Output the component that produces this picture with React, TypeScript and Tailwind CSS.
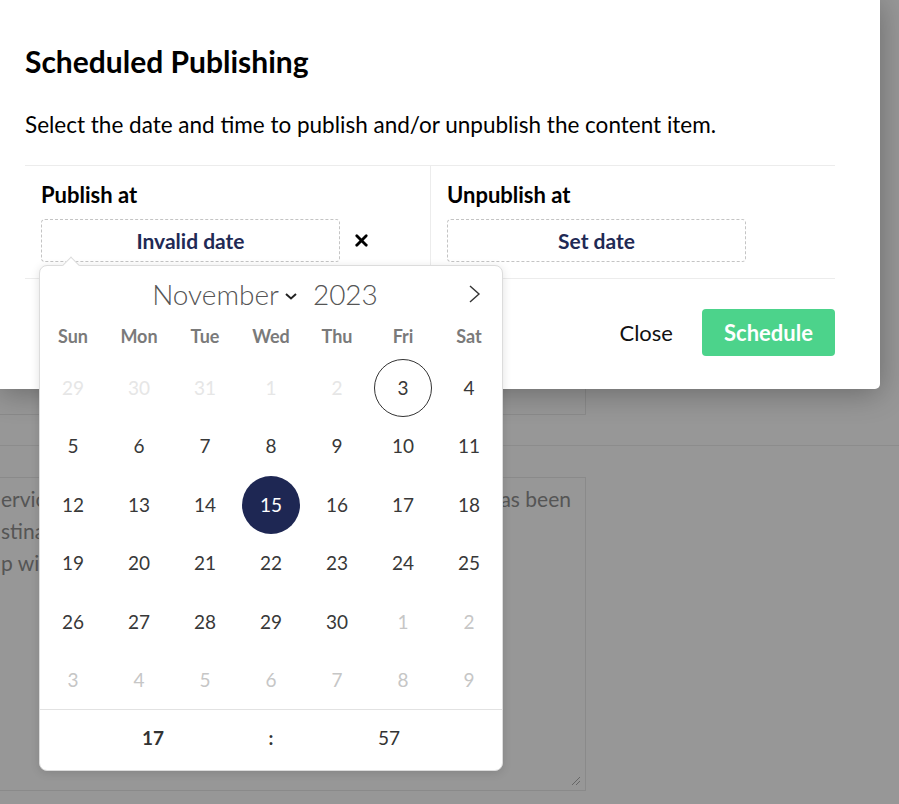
import { X } from 'lucide-react'

type Day = { n: number; kind: 'off' | 'cur' | 'next' | 'today' | 'sel' }

const weeks: Day[][] = [
  [
    { n: 29, kind: 'off' },
    { n: 30, kind: 'off' },
    { n: 31, kind: 'off' },
    { n: 1, kind: 'off' },
    { n: 2, kind: 'off' },
    { n: 3, kind: 'today' },
    { n: 4, kind: 'cur' },
  ],
  [5, 6, 7, 8, 9, 10, 11].map((n) => ({ n, kind: 'cur' as const })),
  [12, 13, 14, 15, 16, 17, 18].map((n) => ({ n, kind: n === 15 ? ('sel' as const) : ('cur' as const) })),
  [19, 20, 21, 22, 23, 24, 25].map((n) => ({ n, kind: 'cur' as const })),
  [
    ...[26, 27, 28, 29, 30].map((n) => ({ n, kind: 'cur' as const })),
    { n: 1, kind: 'next' },
    { n: 2, kind: 'next' },
  ],
  [3, 4, 5, 6, 7, 8, 9].map((n) => ({ n, kind: 'next' as const })),
]

const weekdays = ['Sun', 'Mon', 'Tue', 'Wed', 'Thu', 'Fri', 'Sat']

function DayCell({ day }: { day: Day }) {
  const tone = {
    off: 'text-[#e6e6e6]',
    cur: 'text-[#383838]',
    next: 'text-[#c6c6c6]',
    today: 'text-[#383838] border border-[#333]',
    sel: 'bg-[#1e2753] text-white',
  }[day.kind]
  return (
    <div className="flex h-[58.4px] items-center justify-center">
      <span className={`flex h-[58px] w-[58px] items-center justify-center rounded-full text-[19px] ${tone}`}>
        {day.n}
      </span>
    </div>
  )
}

function DatePicker() {
  return (
    <div className="absolute left-[39px] top-[265px] h-[506px] w-[464px] rounded-[8px] border border-[#dcdcdc] bg-white shadow-[0_2px_10px_rgba(0,0,0,0.12)]">
      {/* arrow */}
      <div className="absolute -top-[7px] left-[25px] h-[12px] w-[12px] rotate-45 border-l border-t border-[#dcdcdc] bg-white" />
      <div className="relative flex h-[56px] items-center justify-center">
        <div className="flex items-center pr-[12px] text-[28px] font-light text-[#555]">
          <span>November</span>
          <svg width="14" height="10" viewBox="0 0 14 10" className="ml-[5px] mt-[4px]">
            <path d="M2 3l5 4.5L12 3" fill="none" stroke="#222" strokeWidth="2" />
          </svg>
          <span className="ml-[15px]">2023</span>
        </div>
        <svg width="14" height="20" viewBox="0 0 14 20" className="absolute right-[20px] top-[18px]">
          <path d="M2 2l9 8-9 8" fill="none" stroke="#333" strokeWidth="1.4" />
        </svg>
      </div>
      <div className="grid h-[28px] grid-cols-7 items-center">
        {weekdays.map((w) => (
          <div key={w} className="text-center text-[18px] font-bold text-[#7a7a7a]">
            {w}
          </div>
        ))}
      </div>
      <div className="mt-[9px] grid grid-cols-7">
        {weeks.flat().map((d, i) => (
          <DayCell key={i} day={d} />
        ))}
      </div>
      <div className="border-t border-[#e2e2e2]">
        <div className="mx-auto grid h-[56px] w-[354px] grid-cols-3 items-center text-center text-[19px] text-[#333]">
          <span className="font-bold">17</span>
          <span className="font-bold">:</span>
          <span>57</span>
        </div>
      </div>
    </div>
  )
}

function DateField({ label }: { label: string }) {
  return (
    <div className="flex h-[43px] w-[299px] items-center justify-center rounded-[4px] border border-dashed border-[#c4c4c4] text-[21px] font-bold text-[#1f2a55]">
      {label}
    </div>
  )
}

export default function App() {
  return (
    <div className="relative h-[804px] w-[899px] overflow-hidden bg-[#979797] font-[Lato,sans-serif]">
      {/* page behind the overlay */}
      <div className="pt-[340px]">
        <div className="ml-[-10px] h-[75px] w-[596px] border border-[#8a8a8a]" />
        <div className="mt-[30px] border-t border-[#8c8c8c]" />
        <div className="relative ml-[-10px] mt-[31px] h-[314px] w-[596px] border border-[#8a8a8a] pl-[10px] pr-[14px] pt-[5px] text-[21px] leading-[32px] text-[#555]">
          <div className="flex justify-between whitespace-nowrap">
            <span>ervices are</span>
            <span>has been</span>
          </div>
          <div className="whitespace-nowrap">stina</div>
          <div className="whitespace-nowrap">p with</div>
          <svg width="10" height="10" viewBox="0 0 10 10" className="absolute bottom-[4px] right-[4px]">
            <path d="M1 9L9 1M5 9L9 5" stroke="#666" strokeWidth="1" />
          </svg>
        </div>
      </div>

      {/* dialog */}
      <div className="absolute left-0 top-0 h-[389px] w-[880px] rounded-br-[5px] bg-white pl-[25px] pr-[45px] text-black shadow-[0_4px_30px_rgba(0,0,0,0.3)]">
        <h1 className="pt-[44px] text-[30px] font-bold leading-[34px]">Scheduled Publishing</h1>
        <p className="mt-[35px] text-[22.5px] leading-[24px]">
          Select the date and time to publish and/or unpublish the content item.
        </p>
        <div className="mt-[28px] grid grid-cols-2 border-y border-[#ececec]">
          <div className="px-[16px] pb-[16px] pt-[17px]">
            <div className="text-[22px] font-bold leading-[24px]">Publish at</div>
            <div className="mt-[12px] flex items-center">
              <DateField label="Invalid date" />
              <X className="ml-[12px]" size={19} strokeWidth={3.5} color="#000" />
            </div>
          </div>
          <div className="border-l border-[#ececec] px-[16px] pb-[16px] pt-[17px]">
            <div className="text-[22px] font-bold leading-[24px]">Unpublish at</div>
            <div className="mt-[12px]">
              <DateField label="Set date" />
            </div>
          </div>
        </div>
        <div className="mt-[30px] flex items-center justify-end gap-[29px]">
          <button className="text-[22px] text-[#111]">Close</button>
          <button className="h-[47px] w-[133px] rounded-[4px] bg-[#4cd38b] text-[22px] font-bold text-white">
            Schedule
          </button>
        </div>
      </div>

      <DatePicker />
    </div>
  )
}
